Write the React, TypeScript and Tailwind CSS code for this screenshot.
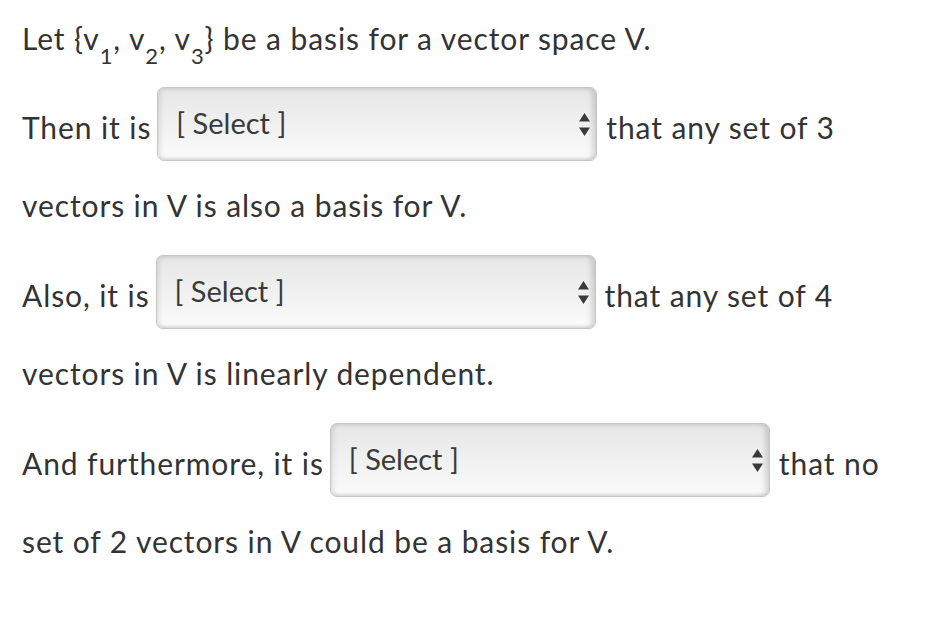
import React from "react";

const font = { fontFamily: "Lato, 'Open Sans', sans-serif" };

function Arrows() {
  return (
    <svg width="11" height="23" viewBox="0 0 11 23" className="shrink-0">
      <path d="M5.5 0 L11 8.5 L0 8.5 Z" fill="#3a3a3a" />
      <path d="M0 14.5 L11 14.5 L5.5 23 Z" fill="#3a3a3a" />
    </svg>
  );
}

function FakeSelect() {
  return (
    <div className="w-[440px] h-[74px] shrink-0 rounded-[7px] border border-[#c6c6c6] bg-gradient-to-b from-[#e6e6e6] to-[#fbfbfb] shadow-[inset_3px_0_4px_rgba(0,0,0,0.07),inset_-4px_0_5px_rgba(0,0,0,0.13),inset_0_-2px_3px_rgba(0,0,0,0.05)] flex items-center justify-between pl-[18px] pr-[6px]">
      <span className="text-[29px] leading-[34px] tracking-[0px] whitespace-pre text-[#3a3a3a] -mt-[3px]">[ Select ]</span>
      <Arrows />
    </div>
  );
}

function SelectRow({ before, after }: { before: string; after: string }) {
  return (
    <div className="flex items-start whitespace-nowrap">
      <span className="mt-[23px]">{before}</span>
      <div className="ml-[6px] mr-[9px]">
        <FakeSelect />
      </div>
      <span className="mt-[23px]">{after}</span>
    </div>
  );
}

export default function App() {
  return (
    <div
      className="w-[928px] h-[626px] bg-white text-[#333333] text-[30px] leading-[34px] tracking-[0.9px] pl-[22px] pt-[21px]"
      style={font}
    >
      <div className="flex flex-col">
        <div className="h-[34px]">
          Let {"{"}v<sub className="text-[22px] align-[-8px] leading-none">1</sub>, v
          <sub className="text-[22px] align-[-8px] leading-none">2</sub>, v
          <sub className="text-[22px] align-[-8px] leading-none">3</sub>
          {"}"} be a basis for a vector space V.
        </div>
        <div className="mt-[32px]">
          <SelectRow before="Then it is" after="that any set of 3" />
        </div>
        <div className="mt-[27px]">vectors in V is also a basis for V.</div>
        <div className="mt-[33px]">
          <SelectRow before="Also, it is" after="that any set of 4" />
        </div>
        <div className="mt-[27px]">vectors in V is linearly dependent.</div>
        <div className="mt-[33px]">
          <SelectRow before="And furthermore, it is" after="that no" />
        </div>
        <div className="mt-[27px]">set of 2 vectors in V could be a basis for V.</div>
      </div>
    </div>
  );
}
